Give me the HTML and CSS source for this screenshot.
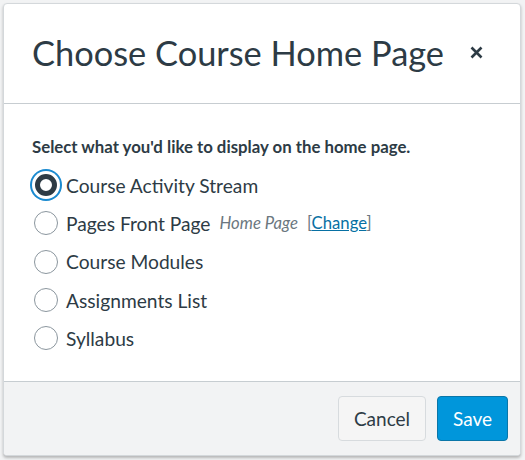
FILE: index.html
```html
<!DOCTYPE html>
<html>
<head>
    <meta charset="UTF-8">
    <title>Choose Course Home Page</title>
    <link rel="stylesheet" href="styles.css">
</head>
<body>
    <div class="dialog">
        <div class="dialog-header">
            <h1 class="dialog-title">Choose Course Home Page</h1>
            <button class="close-btn" aria-label="Close">
                <svg width="13" height="13" viewBox="0 0 13 13">
                    <path d="M1.5 1.5 L11.5 11.5 M11.5 1.5 L1.5 11.5" stroke="#2d3b45" stroke-width="2.6" stroke-linecap="butt"/>
                </svg>
            </button>
        </div>

        <div class="dialog-body">
            <p class="prompt">Select what you'd like to display on the home page.</p>

            <label class="choice">
                <input type="radio" name="home" checked>
                <span>Course Activity Stream</span>
            </label>
            <label class="choice">
                <input type="radio" name="home">
                <span>Pages Front Page</span>
                <em class="front-page">Home Page</em>
                <span class="change">[<a href="#">Change</a>]</span>
            </label>
            <label class="choice">
                <input type="radio" name="home">
                <span>Course Modules</span>
            </label>
            <label class="choice">
                <input type="radio" name="home">
                <span>Assignments List</span>
            </label>
            <label class="choice">
                <input type="radio" name="home">
                <span>Syllabus</span>
            </label>
        </div>

        <div class="dialog-footer">
            <button class="btn">Cancel</button>
            <button class="btn btn-primary">Save</button>
        </div>
    </div>
</body>
</html>
```

FILE: styles.css
```css
* {
    box-sizing: border-box;
}

body {
    font-family: Lato, "Liberation Sans", sans-serif;
    margin: 0;
    padding: 3px 4px 4px 3px;
    background: #f2f3f4;
    color: #2d3b45;
}

.dialog {
    background: white;
    border: 1px solid #d4d8db;
    border-radius: 4px;
    box-shadow: 0 2px 3px rgba(0, 0, 0, 0.25);
    height: 453px;
    display: flex;
    flex-direction: column;
    overflow: hidden;
}

.dialog-header {
    height: 100px;
    flex: none;
    display: flex;
    align-items: center;
    justify-content: space-between;
    padding: 0 37px 0 28px;
    border-bottom: 1px solid #c7cdd1;
}

.dialog-title {
    margin: 0;
    font-size: 34.4px;
    font-weight: 400;
    line-height: 1.2;
    padding-bottom: 1px;
}

.close-btn {
    background: none;
    border: 0;
    padding: 0;
    margin-top: -3px;
    cursor: pointer;
    display: flex;
}

.dialog-body {
    flex: 1;
    padding: 32px 28px 0 28px;
}

.prompt {
    margin: 0 0 8px 0;
    font-size: 16.8px;
    font-weight: 700;
    line-height: 22px;
}

.choice {
    display: flex;
    align-items: center;
    height: 38.3px;
    font-size: 19.2px;
    cursor: pointer;
}

.choice input {
    -webkit-appearance: none;
    appearance: none;
    width: 24px;
    height: 24px;
    margin: 0 8px 0 2px;
    border: 1px solid #8b969e;
    border-radius: 50%;
    background: white;
    flex: none;
}

.choice input:checked {
    width: 22px;
    height: 22px;
    margin: 0 9px 0 3px;
    border: 5px solid #2d3b45;
    box-shadow: 0 0 0 3px white, 0 0 0 5px #1a8ad0;
}

.front-page {
    font-size: 16.7px;
    color: #6b7780;
    margin-left: 9px;
}

.change {
    font-size: 16.7px;
    color: #6b7780;
    margin-left: 9px;
}

.change a {
    color: #0770a3;
}

.dialog-footer {
    height: 74px;
    flex: none;
    display: flex;
    align-items: center;
    justify-content: flex-end;
    gap: 11px;
    padding: 0 12px 0 0;
    background: #f2f3f4;
    border-top: 1px solid #c7cdd1;
}

.btn {
    font-family: inherit;
    font-size: 19px;
    height: 45px;
    width: 88px;
    padding: 0;
    border-radius: 4px;
    border: 1px solid #d7dbde;
    background: #f5f5f5;
    color: #2d3b45;
    cursor: pointer;
}

.btn-primary {
    width: 71px;
    background: #0096db;
    border-color: #0a76a8;
    color: white;
}
```
